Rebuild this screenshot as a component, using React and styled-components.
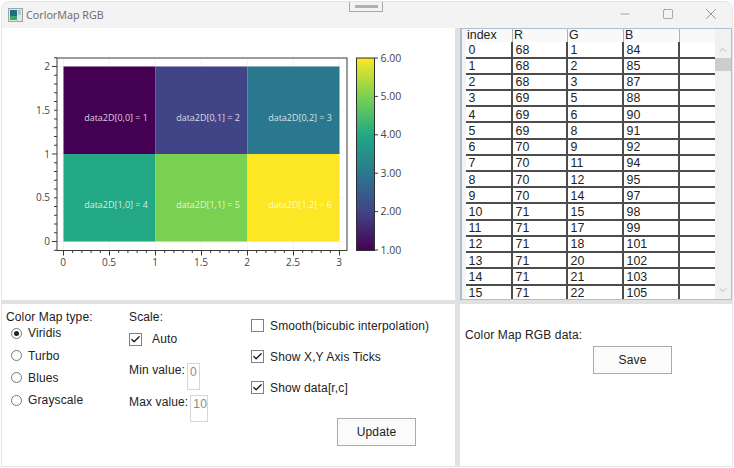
import styled, { createGlobalStyle } from "styled-components";
import { Minus, Square, X, ChevronUp, ChevronDown, Check } from "lucide-react";

const GlobalStyle = createGlobalStyle`
  html, body {
    margin: 0;
    padding: 0;
    background: #fff;
  }
  body {
    font-family: "Liberation Sans", Arial, sans-serif;
  }
`;

const Page = styled.div`
  width: 734px;
  height: 468px;
  padding: 1px;
  box-sizing: border-box;
  background: #fff;
  overflow: hidden;
`;

const Window = styled.div`
  position: relative;
  width: 732px;
  height: 466px;
  border-radius: 8px 8px 0 0;
  border: 1px solid #e4e4e4;
  box-sizing: border-box;
  background: #fff;
  display: flex;
  flex-direction: column;
  overflow: hidden;
`;

const TitleBar = styled.div`
  height: 26px;
  flex: none;
  background: #f3f3f3;
  display: flex;
  align-items: center;
  padding-left: 6px;
  font-family: "Noto Sans", sans-serif;
  font-size: 10.7px;
  color: #707070;
`;

const TitleText = styled.span`
  margin-left: 3px;
  flex: 1;
`;

const Handle = styled.div`
  position: absolute;
  left: 347px;
  top: -1px;
  width: 34px;
  height: 11px;
  box-sizing: border-box;
  background: #f3f3f3;
  border: 1px solid #a8a8a8;
  border-top: none;
  display: flex;
  align-items: center;
  justify-content: center;
`;

const HandleLines = styled.div`
  width: 23px;
  height: 3px;
  background: #b0b0b0;
`;

const WindowButton = styled.div`
  width: 43px;
  height: 26px;
  margin-top: -2px;
  display: flex;
  align-items: center;
  justify-content: center;
  color: #6a6a6a;
`;

const Body = styled.div`
  flex: 1;
  display: grid;
  grid-template-columns: 453px 5px 1fr;
  grid-template-rows: 272px 4px 1fr;
  min-height: 0;
`;

const PlotPane = styled.div`
  background: #fff;
`;

const SplitV = styled.div`
  background: #e1e1e1;
  grid-column: 2;
  grid-row: 1 / 4;
`;

const SplitH = styled.div`
  background: #e1e1e1;
  grid-row: 2;
  grid-column: ${(p) => p.$col};
`;

const TablePane = styled.div`
  border: 1px solid #a9c0d6;
  border-left: 2px solid #a9c0d6;
  display: flex;
  overflow: hidden;
  box-sizing: border-box;
`;

const RowHeader = styled.div`
  width: 4px;
  flex: none;
  background: #f4f4f4;
`;

const Grid = styled.div`
  width: 249px;
  flex: none;
  overflow: hidden;
  font-size: 12.4px;
  color: #222;
  background: #fff;
`;

const HeadRow = styled.div`
  display: grid;
  grid-template-columns: 47px 55px 56px 56px 35px;
  height: 13.3px;
  box-sizing: border-box;
  line-height: 13px;
  border-bottom: 1px solid #e6e6e6;
`;

const HeadCell = styled.div`
  padding-left: 1px;
  border-right: 1px solid #b0b0b0;
  background: #f9f9f9;
  white-space: nowrap;
  &:last-child {
    border-right: none;
  }
`;

const DataRow = styled.div`
  display: grid;
  grid-template-columns: 47px 55px 56px 56px 35px;
  height: 16.23px;
  box-sizing: border-box;
  line-height: 12px;
  border-bottom: 2px solid #4c4c4c;
`;

const DataCell = styled.div`
  padding: 1.5px 0 0 2.5px;
  border-right: 2px solid #4c4c4c;
  white-space: nowrap;
  &:last-child {
    border-right: none;
  }
`;

const ScrollBar = styled.div`
  width: 16px;
  flex: none;
  background: #f1f1f1;
  display: flex;
  flex-direction: column;
  align-items: center;
  color: #a0a0a0;
  padding-top: 15px;
`;

const ScrollThumb = styled.div`
  width: 100%;
  height: 13px;
  background: #cdcdcd;
  margin-top: 2px;
`;

const ScrollDown = styled.div`
  margin-top: auto;
  height: 14px;
  margin-bottom: 3px;
`;

const ControlPane = styled.div`
  grid-column: 1;
  grid-row: 3;
  display: flex;
  font-size: 12px;
  letter-spacing: 0.13px;
  color: #222;
  padding: 5px 0 0 4px;
`;

const TypeColumn = styled.div`
  width: 123px;
  flex: none;
`;

const ScaleColumn = styled.div`
  width: 122px;
  flex: none;
`;

const OptionColumn = styled.div`
  flex: 1;
  padding-top: 1px;
`;

const Label = styled.div`
  height: 16px;
  line-height: 16px;
`;

const RadioRow = styled.div`
  display: flex;
  align-items: center;
  height: 22.4px;
  padding-left: 5px;
  gap: 6px;
  margin-top: ${(p) => (p.$first ? "-3px" : "0")};
`;

const RadioDot = styled.span`
  width: 11px;
  height: 11px;
  box-sizing: border-box;
  border-radius: 50%;
  border: 1px solid #777;
  background: #fff;
  display: flex;
  align-items: center;
  justify-content: center;
  &::after {
    content: "";
    width: 5px;
    height: 5px;
    border-radius: 50%;
    background: ${(p) => (p.$on ? "#222" : "transparent")};
  }
`;

const CheckRow = styled.div`
  display: flex;
  align-items: center;
  height: ${(p) => p.$h || "31px"};
  gap: ${(p) => p.$gap || "6px"};
`;

const CheckBox = styled.span`
  width: 13px;
  height: 13px;
  box-sizing: border-box;
  border: 1px solid #808080;
  background: #fff;
  display: flex;
  align-items: center;
  justify-content: center;
  color: #111;
`;

const ValueRow = styled.div`
  display: flex;
  align-items: flex-start;
  gap: 2px;
  height: 32px;
  line-height: 16px;
  margin-top: ${(p) => p.$mt || "0"};
`;

const ValueBox = styled.div`
  width: ${(p) => p.$w};
  height: 27px;
  margin-top: 1px;
  box-sizing: border-box;
  border: 1px solid #d6d6d6;
  color: #8a8a8a;
  padding-left: 2px;
  line-height: 16px;
`;

const PushButton = styled.div`
  width: 79px;
  height: 28px;
  box-sizing: border-box;
  border: 1px solid #ababab;
  background: #fbfbfb;
  display: flex;
  align-items: center;
  justify-content: center;
  font-size: 12px;
  color: #222;
`;

const UpdateWrap = styled.div`
  margin: 15px 0 0 86px;
`;

const SavePane = styled.div`
  grid-column: 3;
  grid-row: 3;
  font-size: 12px;
  letter-spacing: 0.13px;
  color: #222;
  padding: 23px 0 0 5px;
`;

const SaveWrap = styled.div`
  margin: 3px 0 0 128px;
`;

const rows = [
  [0, 68, 1, 84], [1, 68, 2, 85], [2, 68, 3, 87], [3, 69, 5, 88],
  [4, 69, 6, 90], [5, 69, 8, 91], [6, 70, 9, 92], [7, 70, 11, 94],
  [8, 70, 12, 95], [9, 70, 14, 97], [10, 71, 15, 98], [11, 71, 17, 99],
  [12, 71, 18, 101], [13, 71, 20, 102], [14, 71, 21, 103], [15, 71, 22, 105],
];

const cells = [
  { x: 63.5, y: 66.5, w: 92, h: 87.5, c: "#440154", t: "data2D[0,0] = 1" },
  { x: 155.5, y: 66.5, w: 92, h: 87.5, c: "#414487", t: "data2D[0,1] = 2" },
  { x: 247.5, y: 66.5, w: 92, h: 87.5, c: "#2a788e", t: "data2D[0,2] = 3" },
  { x: 63.5, y: 154, w: 92, h: 87.5, c: "#22a884", t: "data2D[1,0] = 4" },
  { x: 155.5, y: 154, w: 92, h: 87.5, c: "#7ad151", t: "data2D[1,1] = 5" },
  { x: 247.5, y: 154, w: 92, h: 87.5, c: "#fde725", t: "data2D[1,2] = 6" },
];

const xTicks = [["0", 63.5], ["0.5", 109.5], ["1", 155.5], ["1.5", 201.5], ["2", 247.5], ["2.5", 293.5], ["3", 339.5]];
const yTicks = [["2", 66.5], ["1.5", 110.3], ["1", 154], ["0.5", 197.8], ["0", 241.5]];
const barTicks = [["6.00", 58], ["5.00", 96.4], ["4.00", 134.8], ["3.00", 173.2], ["2.00", 211.6], ["1.00", 250]];

function Plot() {
  const minorX = [];
  for (let v = 0; v <= 30; v++) minorX.push(63.5 + (v * 276) / 30);
  const minorY = [];
  for (let v = -1; v <= 21; v++) minorY.push(241.5 - (v * 175) / 20);
  return (
    <svg width="453" height="272" viewBox="2 28 453 272" style={{ display: "block" }}>
      <defs>
        <linearGradient id="viridis" x1="0" y1="1" x2="0" y2="0">
          <stop offset="0" stopColor="#440154" />
          <stop offset="0.2" stopColor="#414487" />
          <stop offset="0.4" stopColor="#2a788e" />
          <stop offset="0.6" stopColor="#22a884" />
          <stop offset="0.8" stopColor="#7ad151" />
          <stop offset="1" stopColor="#fde725" />
        </linearGradient>
      </defs>
      {xTicks.map(([, x]) => (
        <line key={x} x1={x} x2={x} y1="58" y2="250" stroke="#f2f2f2" />
      ))}
      {yTicks.map(([, y]) => (
        <line key={y} x1="57" x2="347" y1={y} y2={y} stroke="#f2f2f2" />
      ))}
      {cells.map((c) => (
        <g key={c.t}>
          <rect x={c.x} y={c.y} width={c.w} height={c.h} fill={c.c} />
          <text
            x={c.x + 84.5}
            y={c.y + 54}
            textAnchor="end"
            fontSize="9"
            fontFamily="Open Sans, Liberation Sans, sans-serif"
            fill="#fff"
            fillOpacity="0.82"
          >
            {c.t}
          </text>
        </g>
      ))}
      <rect x="57" y="58" width="290" height="192.5" fill="none" stroke="#3a3a3a" strokeWidth="1" />
      {minorX.map((x, i) => (
        <line key={i} x1={x} x2={x} y1="250.5" y2={i % 5 === 0 ? 255.5 : 253} stroke="#3a3a3a" />
      ))}
      {minorY.map((y, i) => (
        <line key={i} x1={(i - 1) % 10 === 0 ? 52 : 54} x2="57" y1={y} y2={y} stroke="#3a3a3a" />
      ))}
      {xTicks.map(([t, x]) => (
        <text key={t} x={x - 0.5} y="266" textAnchor="middle" fontSize="10" fontFamily="Open Sans, sans-serif" fill="#444">
          {t}
        </text>
      ))}
      {yTicks.map(([t, y]) => (
        <text key={t} x="50" y={y + 3.5} textAnchor="end" fontSize="10" fontFamily="Open Sans, sans-serif" fill="#444">
          {t}
        </text>
      ))}
      <rect x="356.5" y="58" width="18" height="192.5" fill="url(#viridis)" stroke="#2f2f2f" />
      {barTicks.map(([t, y]) => (
        <g key={t}>
          <line x1="375" x2="378" y1={y} y2={y} stroke="#3a3a3a" />
          <text x="380.5" y={y + 3.5} fontSize="10.5" fontFamily="Open Sans, sans-serif" fill="#444">
            {t}
          </text>
        </g>
      ))}
    </svg>
  );
}

function AppIcon() {
  return (
    <svg width="15" height="14" viewBox="0 0 15 14">
      <rect x="0.5" y="0.5" width="14" height="13" fill="#dfe7e8" stroke="#9aa5a8" />
      <rect x="2" y="2" width="7" height="10" fill="#1f6f7c" />
      <rect x="2" y="8" width="7" height="4" fill="#3fa56b" />
      <rect x="10" y="2" width="3" height="5" fill="#b9c6c9" />
    </svg>
  );
}

const Tick = () => <Check size={11} strokeWidth={2.6} />;

export default function App() {
  return (
    <Page>
      <GlobalStyle />
      <Window>
        <TitleBar>
          <AppIcon />
          <TitleText>CorlorMap RGB</TitleText>
          <WindowButton><Minus size={14} strokeWidth={1} /></WindowButton>
          <WindowButton><Square size={12} strokeWidth={1.1} /></WindowButton>
          <WindowButton><X size={18} strokeWidth={0.9} /></WindowButton>
        </TitleBar>
        <Handle><HandleLines /></Handle>
        <Body>
          <PlotPane><Plot /></PlotPane>
          <SplitV />
          <TablePane>
            <RowHeader />
            <Grid>
              <HeadRow>
                {["index", "R", "G", "B", ""].map((h, i) => (
                  <HeadCell key={i}>{h}</HeadCell>
                ))}
              </HeadRow>
              {rows.map((r) => (
                <DataRow key={r[0]}>
                  {[...r, ""].map((v, i) => (
                    <DataCell key={i}>{v}</DataCell>
                  ))}
                </DataRow>
              ))}
            </Grid>
            <ScrollBar>
              <ChevronUp size={12} strokeWidth={1.4} />
              <ScrollThumb />
              <ScrollDown><ChevronDown size={12} strokeWidth={1.4} /></ScrollDown>
            </ScrollBar>
          </TablePane>
          <SplitH $col={1} />
          <SplitH $col={3} />
          <ControlPane>
            <TypeColumn>
              <Label>Color Map type:</Label>
              <RadioRow $first><RadioDot $on />Viridis</RadioRow>
              <RadioRow><RadioDot />Turbo</RadioRow>
              <RadioRow><RadioDot />Blues</RadioRow>
              <RadioRow><RadioDot />Grayscale</RadioRow>
            </TypeColumn>
            <ScaleColumn>
              <Label>Scale:</Label>
              <CheckRow $h="28px" $gap="10px"><CheckBox><Tick /></CheckBox>Auto</CheckRow>
              <ValueRow $mt="9px">Min value:<ValueBox $w="13px">0</ValueBox></ValueRow>
              <ValueRow>Max value:<ValueBox $w="18px">10</ValueBox></ValueRow>
            </ScaleColumn>
            <OptionColumn>
              <CheckRow><CheckBox />Smooth(bicubic interpolation)</CheckRow>
              <CheckRow><CheckBox><Tick /></CheckBox>Show X,Y Axis Ticks</CheckRow>
              <CheckRow><CheckBox><Tick /></CheckBox>Show data[r,c]</CheckRow>
              <UpdateWrap><PushButton>Update</PushButton></UpdateWrap>
            </OptionColumn>
          </ControlPane>
          <SavePane>
            <Label>Color Map RGB data:</Label>
            <SaveWrap><PushButton>Save</PushButton></SaveWrap>
          </SavePane>
        </Body>
      </Window>
    </Page>
  );
}
